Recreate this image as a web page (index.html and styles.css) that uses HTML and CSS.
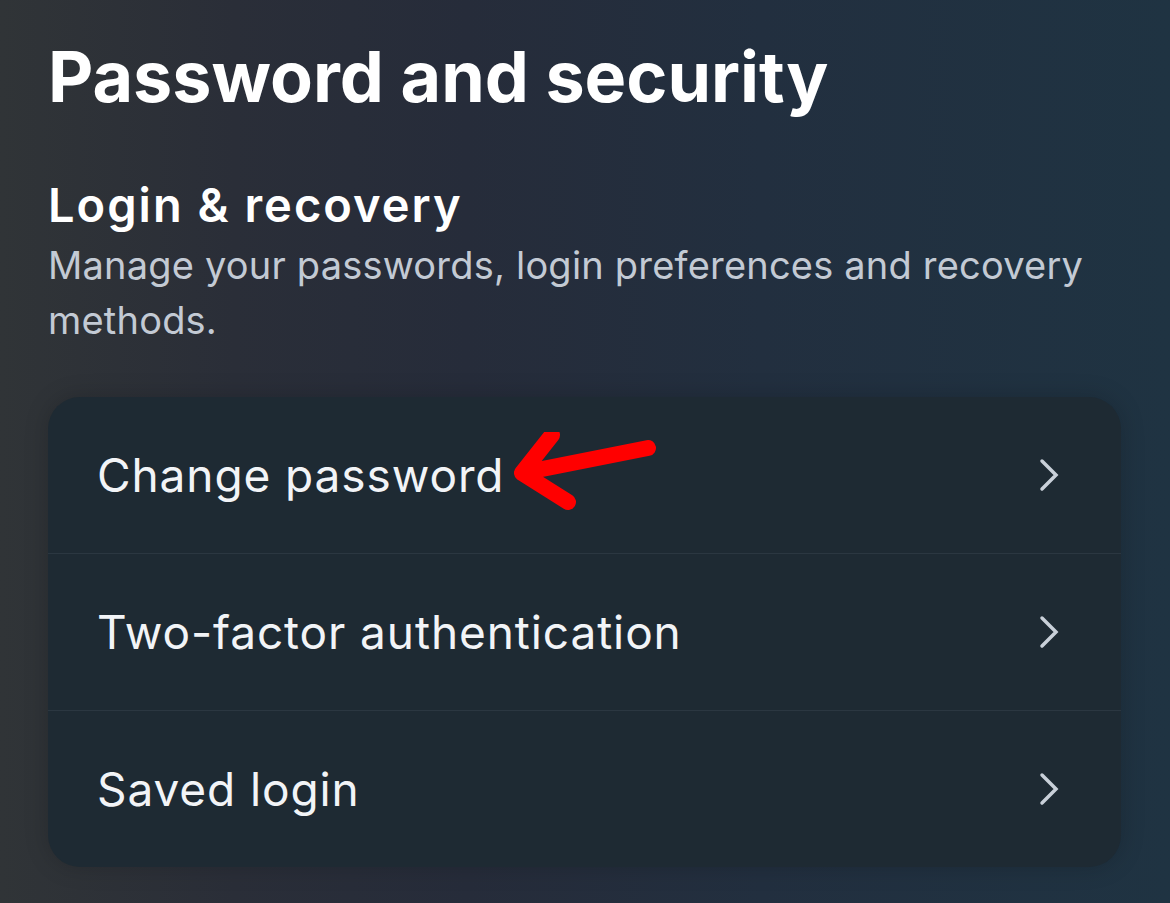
FILE: index.html
```html
<!DOCTYPE html>
<html lang="en">
<head>
<meta charset="utf-8">
<title>Password and security</title>
<link rel="stylesheet" href="styles.css">
</head>
<body>
<main class="page">
  <h1 class="title">Password and security</h1>
  <h2 class="subtitle">Login &amp; recovery</h2>
  <p class="desc">Manage your passwords, login preferences and recovery methods.</p>
  <div class="card">
    <div class="row">
      <span class="label">Change password</span>
      <svg class="annot" width="150" height="90" viewBox="0 0 150 90">
        <path d="M136 16 L10 41 M40 3 L10 41 L56 70" fill="none" stroke="#ff0000" stroke-width="16" stroke-linecap="round" stroke-linejoin="round"/>
      </svg>
      <svg class="chev" width="24" height="36" viewBox="0 0 24 36"><path d="M4 4 L18 18 L4 32" fill="none" stroke="#c9d0d9" stroke-width="3.5" stroke-linecap="round" stroke-linejoin="miter"/></svg>
    </div>
    <div class="row">
      <span class="label">Two-factor authentication</span>
      <svg class="chev" width="24" height="36" viewBox="0 0 24 36"><path d="M4 4 L18 18 L4 32" fill="none" stroke="#c9d0d9" stroke-width="3.5" stroke-linecap="round" stroke-linejoin="miter"/></svg>
    </div>
    <div class="row">
      <span class="label">Saved login</span>
      <svg class="chev" width="24" height="36" viewBox="0 0 24 36"><path d="M4 4 L18 18 L4 32" fill="none" stroke="#c9d0d9" stroke-width="3.5" stroke-linecap="round" stroke-linejoin="miter"/></svg>
    </div>
  </div>
</main>
</body>
</html>
```
FILE: styles.css
```css
html, body {
  margin: 0;
  height: 100%;
}
body {
  background: linear-gradient(90deg, #303437 0%, #2a2e38 20%, #262c3a 40%, #222f3f 65%, #1f3342 100%);
  font-family: Inter, "Noto Sans", sans-serif;
  color: #ffffff;
  overflow: hidden;
}
.page {
  padding: 0 49px 0 48px;
}
.title {
  margin: 0;
  padding-top: 35px;
  font-size: 70px;
  font-weight: 700;
  line-height: 84px;
  letter-spacing: 0;
}
.subtitle {
  margin: 0;
  padding-top: 58px;
  font-size: 47px;
  font-weight: 600;
  line-height: 56px;
  letter-spacing: 2px;
}
.desc {
  margin: 0;
  padding-top: 5px;
  font-size: 38px;
  line-height: 55px;
  color: #c3cad4;
  font-weight: 400;
  letter-spacing: 0.2px;
}
.card {
  margin-top: 49px;
  background: #1e2a33;
  border-radius: 32px;
  box-shadow: 0 0 24px rgba(0, 0, 0, 0.18);
  overflow: hidden;
}
.row {
  position: relative;
  height: 156px;
  display: flex;
  align-items: center;
  padding: 0 59px 0 49px;
  border-top: 1.5px solid #2b3741;
}
.row:first-child {
  border-top: none;
}
.label {
  font-size: 46px;
  font-weight: 400;
  color: #f2f4f7;
  flex: 1;
  letter-spacing: 0.9px;
}
.chev {
  flex: none;
}
.annot {
  position: absolute;
  left: 464px;
  top: 35px;
}
```
